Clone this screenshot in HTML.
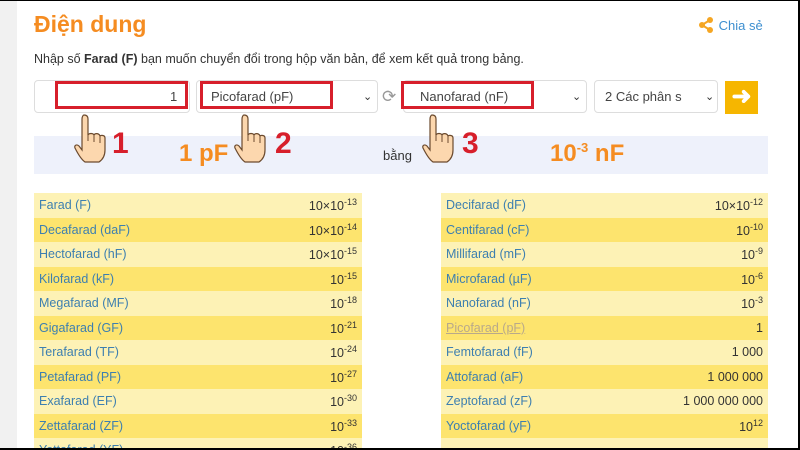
<!DOCTYPE html>
<html><head><meta charset="utf-8"><style>
body{margin:0;width:800px;height:450px;overflow:hidden;background:#000;font-family:"Liberation Sans","Noto Sans CJK SC",sans-serif;}
.pg{position:absolute;left:0;top:1px;width:798px;height:447px;background:#fff;overflow:hidden}
.strip{position:absolute;left:0;top:0;width:17px;height:100%;background:#f1f1f1}
.a{position:absolute}
h1{position:absolute;left:34px;top:10px;margin:0;font-size:23px;color:#f58c21;font-weight:bold}
.sel{position:absolute;top:79px;height:33px;border:1px solid #ddd;border-radius:4px;box-sizing:border-box;font-size:13px;color:#444;background:#fff}
.red{position:absolute;border:3px solid #d71f2b;box-sizing:border-box}
.chev{position:absolute;top:9px;font-size:11px;color:#333}
.num{position:absolute;font-size:30px;font-weight:bold;color:#d71f2b}
table{position:absolute;border-collapse:collapse;font-size:12.5px}
td{height:24.5px;padding:0 5px;}
tr:nth-child(odd) td{background:#fdf2b5}
tr:nth-child(even) td{background:#fde46e}
td.n{color:#3d7fb0}
td.v{text-align:right;color:#333}
sup{font-size:9px}
</style></head><body><div class="pg">
<div class="strip"></div>
<h1>Điện dung</h1>
<div class="a" style="left:697px;top:15px;font-size:13px;color:#3d8fd0"><svg width="18" height="18" style="vertical-align:-4px" viewBox="0 0 18 18"><line x1="13" y1="4" x2="5" y2="9" stroke="#f5a623" stroke-width="2"/><line x1="13" y1="14" x2="5" y2="9" stroke="#f5a623" stroke-width="2"/><circle cx="13" cy="4" r="3" fill="#f5a623"/><circle cx="13" cy="14" r="3" fill="#f5a623"/><circle cx="5" cy="9" r="3" fill="#f5a623"/></svg> Chia sẻ</div>
<div class="a" style="left:34px;top:51px;font-size:12.5px;color:#333">Nhập số <b>Farad (F)</b> bạn muốn chuyển đổi trong hộp văn bản, để xem kết quả trong bảng.</div>
<div class="sel" style="left:34px;width:156px"></div>
<div class="red" style="left:55px;top:80px;width:133px;height:28px"></div>
<div class="a" style="left:170px;top:88px;font-size:13px;color:#444">1</div>
<div class="sel" style="left:196px;width:182px"><span class="chev" style="left:166px">&#8964;</span></div>
<div class="red" style="left:200px;top:80px;width:133px;height:28px"></div>
<div class="a" style="left:211px;top:88px;font-size:13px;color:#444">Picofarad (pF)</div>
<div class="a" style="left:382px;top:86px;font-size:17px;color:#999">⟳</div>
<div class="sel" style="left:403px;width:184px"><span class="chev" style="left:168px">&#8964;</span></div>
<div class="red" style="left:401px;top:80px;width:133px;height:28px"></div>
<div class="a" style="left:420px;top:88px;font-size:13px;color:#444">Nanofarad (nF)</div>
<div class="sel" style="left:594px;width:124px"><span style="position:absolute;left:10px;top:8px">2 Các phân s</span><span class="chev" style="left:110px">&#8964;</span></div>
<div class="a" style="left:725px;top:80px;width:33px;height:33px;background:#f6b600;color:#fff;font-size:24px;font-weight:bold;text-align:center;line-height:32px">&#10140;</div>
<div class="a" style="left:34px;top:135px;width:734px;height:38px;background:#eef1fb"></div>
<div class="a" style="left:179px;top:139px;font-size:24px;font-weight:bold;color:#f58c21">1 pF</div>
<div class="a" style="left:383px;top:147px;font-size:13px;color:#333">bằng</div>
<div class="a" style="left:550px;top:139px;font-size:24px;font-weight:bold;color:#f58c21">10<sup style="font-size:13px">-3</sup> nF</div>
<svg class="a" style="left:0;top:0" width="800" height="200">
<defs><g id="h"><path d="M12 2 c3 0 4 2 4 4 l0 16 c1-2 5-2 6 0 c1-2 5-2 6 1 c1-1 5-1 5 2 l0 12 c0 6-3 10-6 12 l-14 0 c-3-2-7-8-10-14 c-1-3 2-4 4-2 l3 4 l0-31 c0-2 1-4 2-4z" fill="#fcd7ae" stroke="#6b4a2e" stroke-width="1.2"/><path d="M16 22 l0 6 M22 22 l0 7 M28 23 l0 7" stroke="#6b4a2e" stroke-width="1"/></g></defs>
<use href="#h" x="72" y="112"/><use href="#h" x="232" y="112"/><use href="#h" x="420" y="112"/>
</svg>
<div class="num" style="left:112px;top:126px">1</div>
<div class="num" style="left:275px;top:126px">2</div>
<div class="num" style="left:462px;top:126px">3</div>
<table style="left:34px;top:192px;width:328px">
<tr><td class="n">Farad (F)</td><td class="v">10×10<sup>-13</sup></td></tr>
<tr><td class="n">Decafarad (daF)</td><td class="v">10×10<sup>-14</sup></td></tr>
<tr><td class="n">Hectofarad (hF)</td><td class="v">10×10<sup>-15</sup></td></tr>
<tr><td class="n">Kilofarad (kF)</td><td class="v">10<sup>-15</sup></td></tr>
<tr><td class="n">Megafarad (MF)</td><td class="v">10<sup>-18</sup></td></tr>
<tr><td class="n">Gigafarad (GF)</td><td class="v">10<sup>-21</sup></td></tr>
<tr><td class="n">Terafarad (TF)</td><td class="v">10<sup>-24</sup></td></tr>
<tr><td class="n">Petafarad (PF)</td><td class="v">10<sup>-27</sup></td></tr>
<tr><td class="n">Exafarad (EF)</td><td class="v">10<sup>-30</sup></td></tr>
<tr><td class="n">Zettafarad (ZF)</td><td class="v">10<sup>-33</sup></td></tr>
<tr><td class="n">Yottafarad (YF)</td><td class="v">10<sup>-36</sup></td></tr>
</table>
<table style="left:441px;top:192px;width:327px">
<tr><td class="n">Decifarad (dF)</td><td class="v">10×10<sup>-12</sup></td></tr>
<tr><td class="n">Centifarad (cF)</td><td class="v">10<sup>-10</sup></td></tr>
<tr><td class="n">Millifarad (mF)</td><td class="v">10<sup>-9</sup></td></tr>
<tr><td class="n">Microfarad (µF)</td><td class="v">10<sup>-6</sup></td></tr>
<tr><td class="n">Nanofarad (nF)</td><td class="v">10<sup>-3</sup></td></tr>
<tr><td class="n" style="color:#b9a98a;text-decoration:underline">Picofarad (pF)</td><td class="v">1</td></tr>
<tr><td class="n">Femtofarad (fF)</td><td class="v">1 000</td></tr>
<tr><td class="n">Attofarad (aF)</td><td class="v">1 000 000</td></tr>
<tr><td class="n">Zeptofarad (zF)</td><td class="v">1 000 000 000</td></tr>
<tr><td class="n">Yoctofarad (yF)</td><td class="v">10<sup>12</sup></td></tr>
<tr><td class="n">&nbsp;</td><td class="v"></td></tr>
</table>
</div></body></html>
